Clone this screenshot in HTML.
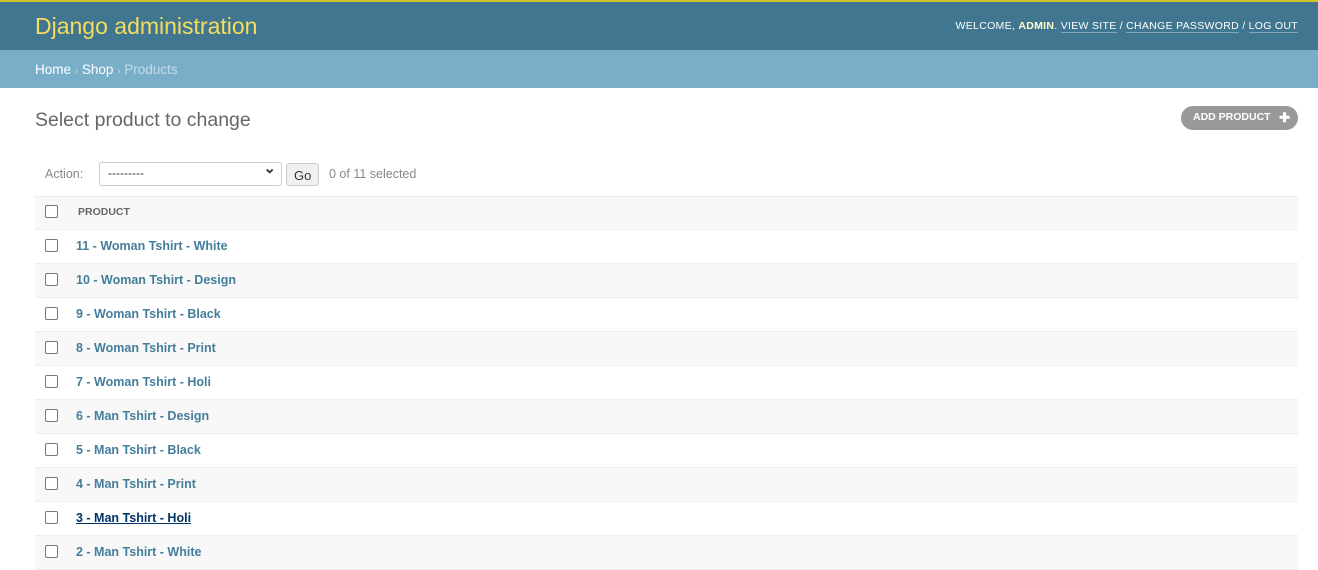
<!DOCTYPE html>
<html><head><meta charset="utf-8"><style>
*{box-sizing:border-box;margin:0;padding:0}
body{width:1318px;height:545px;overflow:hidden;background:#fff;font-family:"Liberation Sans",sans-serif;color:#333;font-size:14px}
#header{height:50px;background:#417690;border-top:2px solid #d4c22a;position:relative}
#branding{position:absolute;left:35px;top:11px;font-size:23px;color:#f5dd5d;font-weight:300}
#tools{position:absolute;right:20px;top:18px;font-size:10.5px;letter-spacing:0.3px;color:#fff}
#tools a{color:#fff;text-decoration:none;border-bottom:1px solid rgba(255,255,255,0.35)}
#tools b{color:#ffc}
#bc{height:38px;background:#79aec8;padding:12px 35px 0;font-size:13.5px;color:#c4dce8}
#bc a{color:#fff;text-decoration:none}
#bc span{font-size:10px}
h1{position:absolute;left:35px;top:109px;font-size:19.5px;font-weight:300;color:#666}
#add{position:absolute;left:1181px;top:106px;width:117px;height:24px;border-radius:12px;background:#999;color:#fff;font-size:10.5px;font-weight:bold;padding:5px 0 0 12px}
#add i{position:absolute;right:8px;top:5px;font-style:normal;font-size:13px;line-height:14px}
#act{position:absolute;left:35px;top:162px;width:1263px;height:34px;font-size:12.5px;color:#888}
#act .l{position:absolute;left:10px;top:5px}
#sel{position:absolute;left:64px;top:0;width:183px;height:24px;border:1px solid #ccc;border-radius:3px;font-size:12px;color:#333;padding:3px 8px}
#sel::after{content:"⌄";position:absolute;right:5px;top:-4px;font-size:15px;font-weight:bold}
#go{position:absolute;left:251px;top:1px;width:33px;height:23px;border:1px solid #ccc;border-radius:3px;background:#f0f0f0;color:#333;font-size:13px;padding:4px 0 0 7px}
#act .c{position:absolute;left:294px;top:5px}
table{position:absolute;left:35px;top:196px;width:1263px;border-collapse:collapse}
td,th{height:34px;border-bottom:1px solid #eee;text-align:left;vertical-align:middle;padding-bottom:3px}
th{background:#f8f8f8;font-size:10.5px;color:#666;font-weight:bold;height:33px;border-top:1px solid #eee;padding-left:2px}
th.cb{padding-left:10px}
tr.a td{background:#f8f8f8}
.cb{width:41px;padding-left:10px}
.cb div{width:13px;height:13px;border:1px solid #777;border-radius:2px;background:#fff}
td a{color:#447e9b;font-weight:bold;font-size:12.5px;text-decoration:none}
</style></head><body>
<div id="header"><div id="branding">Django administration</div>
<div id="tools">WELCOME, <b>ADMIN</b>. <a>VIEW SITE</a> / <a>CHANGE PASSWORD</a> / <a>LOG OUT</a></div></div>
<div id="bc"><a>Home</a> <span>›</span> <a>Shop</a> <span>›</span> Products</div>
<h1>Select product to change</h1>
<div id="add">ADD PRODUCT<i>✚</i></div>
<div id="act"><span class="l">Action:</span><div id="sel">---------</div><div id="go">Go</div><span class="c">0 of 11 selected</span></div>
<table>
<tr><th class="cb"><div></div></th><th>PRODUCT</th></tr>
<tr><td class="cb"><div></div></td><td><a>11 - Woman Tshirt - White</a></td></tr>
<tr class="a"><td class="cb"><div></div></td><td><a>10 - Woman Tshirt - Design</a></td></tr>
<tr><td class="cb"><div></div></td><td><a>9 - Woman Tshirt - Black</a></td></tr>
<tr class="a"><td class="cb"><div></div></td><td><a>8 - Woman Tshirt - Print</a></td></tr>
<tr><td class="cb"><div></div></td><td><a>7 - Woman Tshirt - Holi</a></td></tr>
<tr class="a"><td class="cb"><div></div></td><td><a>6 - Man Tshirt - Design</a></td></tr>
<tr><td class="cb"><div></div></td><td><a>5 - Man Tshirt - Black</a></td></tr>
<tr class="a"><td class="cb"><div></div></td><td><a>4 - Man Tshirt - Print</a></td></tr>
<tr><td class="cb"><div></div></td><td><a style="color:#036;text-decoration:underline">3 - Man Tshirt - Holi</a></td></tr>
<tr class="a"><td class="cb"><div></div></td><td><a>2 - Man Tshirt - White</a></td></tr>
</table>
</body></html>
